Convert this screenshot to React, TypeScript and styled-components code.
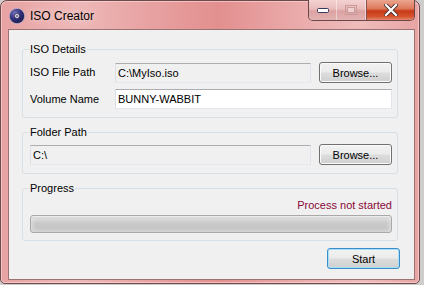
import styled, { createGlobalStyle } from "styled-components"

const GlobalStyle = createGlobalStyle`
  html, body {
    margin: 0;
    padding: 0;
    background: #cfcccc;
  }
  #root {
    width: 424px;
    height: 285px;
  }
`

const uiFont = `"Liberation Sans", Arial, sans-serif`

const Window = styled.div`
  box-sizing: border-box;
  width: 420px;
  height: 284px;
  display: flex;
  flex-direction: column;
  border: 1px solid #6e4a4a;
  border-radius: 7px 7px 5px 5px;
  background: linear-gradient(
    90deg,
    #e7a2a2 0%,
    #eeb8b8 18%,
    #e9a6a6 32%,
    #e38f8f 52%,
    #eaa9a9 70%,
    #efbcbc 86%,
    #e8a4a4 100%
  );
  box-shadow: inset 0 0 0 1px rgba(255, 225, 225, 0.55);
`

const TitleBar = styled.div`
  height: 28px;
  flex: none;
  display: flex;
  align-items: flex-start;
  padding: 0 4px 0 8px;
`

const TitleInfo = styled.div`
  display: flex;
  align-items: center;
  gap: 5px;
  margin-top: 7px;
  font-family: ${uiFont};
  font-size: 12px;
  line-height: 16px;
  color: #000;
  text-shadow: 0 0 6px rgba(255, 240, 240, 0.9);
`

const CaptionButtons = styled.div`
  display: flex;
  margin-left: auto;
  margin-top: -1px;
  height: 20px;
  border: 1px solid #6b4848;
  border-top: none;
  border-radius: 0 0 5px 5px;
  overflow: hidden;
`

const CaptionButton = styled.div<{ $w: number; $close?: boolean }>`
  width: ${(p) => p.$w}px;
  height: 100%;
  display: flex;
  align-items: center;
  justify-content: center;
  border-left: ${(p) => (p.$close ? "1px solid #8a5050" : "none")};
  border-right: ${(p) => (p.$close ? "none" : "1px solid rgba(255,255,255,0.45)")};
  background: ${(p) =>
    p.$close
      ? "linear-gradient(#eba590 0%, #de7a5c 42%, #c83a18 55%, #d4522e 82%, #e2866a 100%)"
      : "linear-gradient(#f4d2d2 0%, #eabcbc 45%, #dca2a2 55%, #e3b2b2 100%)"};
`

const Client = styled.div`
  flex: 1;
  display: flex;
  flex-direction: column;
  margin: 0 4px 3px 7px;
  padding: 13px 16px 0 13px;
  border: 1px solid #9c7373;
  background: #f0f0f0;
  font-family: ${uiFont};
  font-size: 11px;
  color: #000;
`

const Group = styled.fieldset<{ $pad: string }>`
  margin: 0 0 8px 0;
  padding: ${(p) => p.$pad};
  border: 1px solid #d5dfe5;
  border-radius: 3px;
  min-inline-size: 0;
  display: flex;
  flex-direction: column;
`

const Legend = styled.legend`
  padding: 0 1px;
  margin-left: -1px;
  line-height: 13px;
  font-size: 11px;
`

const Row = styled.div<{ $gapTop?: number; $h?: number }>`
  display: flex;
  align-items: center;
  gap: 8px;
  height: ${(p) => p.$h ?? 21}px;
  margin-top: ${(p) => p.$gapTop ?? 0}px;
`

const Label = styled.div`
  width: 77px;
  flex: none;
  line-height: 13px;
`

const TextBox = styled.input<{ $readonly?: boolean }>`
  flex: 1;
  min-width: 0;
  box-sizing: border-box;
  height: 20px;
  margin: 0;
  padding: 0 2px;
  border: 1px solid;
  border-color: #abadb3 #e2e3ea #e3e9ef #dbdfe6;
  border-radius: 0;
  background: ${(p) => (p.$readonly ? "#f0f0f0" : "#ffffff")};
  font-family: ${uiFont};
  font-size: 11px;
  color: #000;
  outline: none;
`

const Button = styled.button<{ $focused?: boolean }>`
  flex: none;
  box-sizing: border-box;
  width: 73px;
  height: 21px;
  margin: 0;
  padding: 0;
  border: 1px solid ${(p) => (p.$focused ? "#3b8ccb" : "#707070")};
  border-radius: 3px;
  background: linear-gradient(#f2f2f2 0%, #ebebeb 48%, #dddddd 52%, #cfcfcf 100%);
  box-shadow: inset 0 0 0 1px ${(p) => (p.$focused ? "#a6e0f7" : "#fbfbfb")};
  font-family: ${uiFont};
  font-size: 11px;
  color: #000;
`

const Status = styled.div`
  text-align: right;
  line-height: 13px;
  color: #8a0838;
`

const ProgressBar = styled.div`
  box-sizing: border-box;
  height: 18px;
  margin-top: 3px;
  border: 1px solid #a9a9a9;
  border-radius: 3px;
  background: linear-gradient(#dddddd 0%, #d6d6d6 25%, #c9c9c9 45%, #c6c6c6 75%, #d2d2d2 100%);
  box-shadow: inset 0 1px 0 #ececec, inset 4px 0 4px -3px #e4e4e4, inset -4px 0 4px -3px #e4e4e4;
`

const Footer = styled.div`
  display: flex;
  justify-content: flex-end;
  margin: -1px -2px 0 0;
`

function DiscIcon() {
  return (
    <svg width="16" height="16" viewBox="0 0 16 16">
      <defs>
        <radialGradient id="disc" cx="0.35" cy="0.3" r="0.75">
          <stop offset="0" stopColor="#7272b8" />
          <stop offset="0.55" stopColor="#2e2e78" />
          <stop offset="1" stopColor="#1c1c4e" />
        </radialGradient>
      </defs>
      <circle cx="8" cy="8" r="7.6" fill="url(#disc)" stroke="#bcbcd8" strokeWidth="0.6" />
      <circle cx="8" cy="8" r="2.4" fill="#f4f4fa" stroke="#26264e" strokeWidth="0.7" />
      <circle cx="8" cy="8" r="0.9" fill="#46466e" />
    </svg>
  )
}

function MinGlyph() {
  return (
    <svg width="12" height="6" viewBox="0 0 12 6">
      <rect x="0.5" y="1.5" width="11" height="4" rx="1" fill="#fff" stroke="#3a3a5a" />
    </svg>
  )
}

function MaxGlyph() {
  return (
    <svg width="12" height="10" viewBox="0 0 12 10">
      <rect x="0.5" y="0.5" width="11" height="9" fill="none" stroke="#c99a9a" />
      <rect x="2.5" y="2.5" width="7" height="5" fill="#f2d0d0" stroke="#c99a9a" />
    </svg>
  )
}

function CloseGlyph() {
  return (
    <svg width="14" height="12" viewBox="0 0 14 12">
      <path d="M2 1 L12 11 M12 1 L2 11" stroke="#4a3030" strokeWidth="4" strokeLinecap="square" />
      <path d="M2 1 L12 11 M12 1 L2 11" stroke="#fff" strokeWidth="2.2" strokeLinecap="square" />
    </svg>
  )
}

export default function App() {
  return (
    <>
      <GlobalStyle />
      <Window>
        <TitleBar>
          <TitleInfo>
            <DiscIcon />
            <span>ISO Creator</span>
          </TitleInfo>
          <CaptionButtons>
            <CaptionButton $w={27}>
              <MinGlyph />
            </CaptionButton>
            <CaptionButton $w={28}>
              <MaxGlyph />
            </CaptionButton>
            <CaptionButton $w={47} $close>
              <CloseGlyph />
            </CaptionButton>
          </CaptionButtons>
        </TitleBar>
        <Client>
          <Group $pad="6px 5px 8px 7px">
            <Legend>ISO Details</Legend>
            <Row>
              <Label>ISO File Path</Label>
              <TextBox $readonly readOnly value="C:\MyIso.iso" />
              <Button>Browse...</Button>
            </Row>
            <Row $gapTop={6} $h={20}>
              <Label>Volume Name</Label>
              <TextBox readOnly value="BUNNY-WABBIT" />
            </Row>
          </Group>
          <Group $pad="5px 5px 8px 7px">
            <Legend>Folder Path</Legend>
            <Row>
              <TextBox $readonly readOnly value="C:\" />
              <Button>Browse...</Button>
            </Row>
          </Group>
          <Group $pad="4px 5px 7px 7px">
            <Legend>Progress</Legend>
            <Status>Process not started</Status>
            <ProgressBar />
          </Group>
          <Footer>
            <Button $focused>Start</Button>
          </Footer>
        </Client>
      </Window>
    </>
  )
}
